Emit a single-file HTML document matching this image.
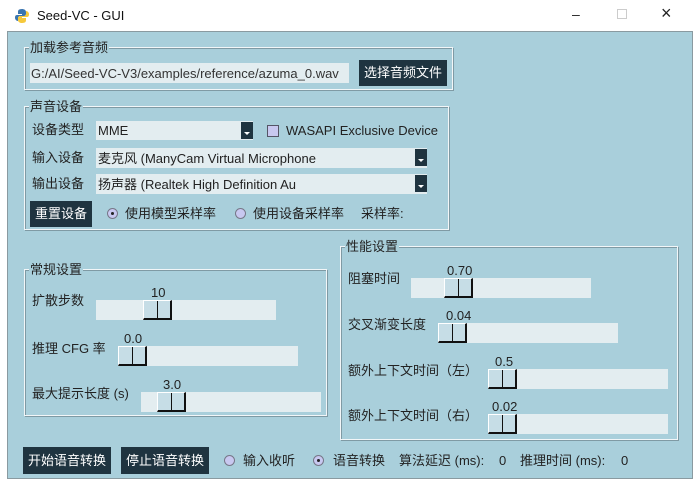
<!DOCTYPE html>
<html><head><meta charset="utf-8"><style>
*{margin:0;padding:0;box-sizing:border-box}
body{width:699px;height:489px;background:#fff;position:relative;overflow:hidden;font-family:"Liberation Sans","Noto Sans CJK SC",sans-serif;font-size:13px;color:#222}
.a{position:absolute;white-space:nowrap;line-height:15px}
#win{position:absolute;left:7px;top:31px;width:686px;height:448px;background:#a9cfdb;border:1px solid #8a9aa0}
.fr{position:absolute;border:1px solid #f2f6f8;box-shadow:inset 1px 1px 0 #7f9aa4, 1px 1px 0 #7f9aa4}
.lg{position:absolute;top:-8px;left:4px;background:#a9cfdb;padding:0 1px;line-height:15px}
.btn{position:absolute;background:#1f3440;color:#fff;text-align:center;line-height:25px;font-size:13px}
.ent{position:absolute;background:#e3edf0}
.dd{position:absolute;right:0;top:1px;width:12px;height:17px;background:#1f3440}
.dd:after{content:"";position:absolute;left:3px;top:10px;border:3px solid transparent;border-top:3px solid #fff}
.tr{position:absolute;background:#e3edf0;height:20px;width:180px}
.th{position:absolute;top:0;width:29px;height:20px;background:#c6dde6;border-left:1px solid #fff;border-top:1px solid #fff;border-right:2px solid #111;border-bottom:2px solid #111}
.th:after{content:"";position:absolute;left:13px;top:0;width:1px;height:18px;background:#111}
.rb{position:absolute;width:11px;height:11px;border-radius:50%;background:#c8c8f0;border:1px solid #778}
.rb.on:after{content:"";position:absolute;left:3px;top:3px;width:3px;height:3px;border-radius:50%;background:#222}
</style></head><body>
<svg class="a" style="left:14px;top:8px" width="16" height="16" viewBox="0 0 16 16"><path d="M8 1C4 1 4 3 4 4v2h4v1H3C1 7 1 9 1 10s1 3 3 3V10c0-1 1-2 2-2h4c1 0 2-1 2-2V4c0-2-2-3-4-3z" fill="#3a75b0"/><path d="M8 15c4 0 4-2 4-3v-2H8V9h5c2 0 2-2 2-3s-1-3-3-3v3c0 1-1 2-2 2H6c-1 0-2 1-2 2v2c0 2 2 3 4 3z" fill="#f6c93c"/></svg>
<div class="a" style="left:37px;top:8px;font-size:13px;color:#111">Seed-VC - GUI</div>
<div class="a" style="left:572px;top:7px;font-size:14px">–</div>
<div class="a" style="left:617px;top:9px;width:10px;height:10px;border:1px solid #ccc"></div>
<div class="a" style="left:661px;top:6px;font-size:18px;color:#222">×</div>
<div id="win"></div>

<div class="fr" style="left:24px;top:47px;width:429px;height:43px"><span class="lg">加载参考音频</span></div>
<div class="ent" style="left:30px;top:63px;width:319px;height:20px"></div>
<div class="a" style="left:31px;top:66px;font-size:13px;color:#333">G:/AI/Seed-VC-V3/examples/reference/azuma_0.wav</div>
<div class="btn" style="left:359px;top:60px;width:88px;height:26px">选择音频文件</div>

<div class="fr" style="left:24px;top:106px;width:425px;height:124px"><span class="lg">声音设备</span></div>
<div class="a" style="left:32px;top:122px">设备类型</div>
<div class="ent" style="left:96px;top:121px;width:157px;height:19px"><div class="dd"></div></div>
<div class="a" style="left:98px;top:123px">MME</div>
<div class="a" style="left:267px;top:125px;width:12px;height:12px;background:#c8c8f0;border:1px solid #556"></div>
<div class="a" style="left:286px;top:123px">WASAPI Exclusive Device</div>
<div class="a" style="left:32px;top:150px">输入设备</div>
<div class="ent" style="left:96px;top:148px;width:331px;height:20px"><div class="dd"></div></div>
<div class="a" style="left:98px;top:151px">麦克风 (ManyCam Virtual Microphone</div>
<div class="a" style="left:32px;top:176px">输出设备</div>
<div class="ent" style="left:96px;top:174px;width:331px;height:20px"><div class="dd"></div></div>
<div class="a" style="left:98px;top:177px">扬声器 (Realtek High Definition Au</div>
<div class="btn" style="left:30px;top:201px;width:62px;height:26px">重置设备</div>
<div class="rb on" style="left:107px;top:208px"></div>
<div class="a" style="left:125px;top:206px">使用模型采样率</div>
<div class="rb" style="left:235px;top:208px"></div>
<div class="a" style="left:253px;top:206px">使用设备采样率</div>
<div class="a" style="left:361px;top:206px">采样率:</div>

<div class="fr" style="left:24px;top:269px;width:303px;height:147px"><span class="lg">常规设置</span></div>
<div class="a" style="left:32px;top:293px">扩散步数</div>
<div class="a" style="left:151px;top:285px">10</div>
<div class="tr" style="left:96px;top:300px"><div class="th" style="left:47px"></div></div>
<div class="a" style="left:32px;top:341px">推理 CFG 率</div>
<div class="a" style="left:124px;top:331px">0.0</div>
<div class="tr" style="left:118px;top:346px"><div class="th" style="left:0"></div></div>
<div class="a" style="left:32px;top:386px">最大提示长度 (s)</div>
<div class="a" style="left:163px;top:377px">3.0</div>
<div class="tr" style="left:141px;top:392px"><div class="th" style="left:16px"></div></div>

<div class="fr" style="left:340px;top:246px;width:338px;height:194px"><span class="lg">性能设置</span></div>
<div class="a" style="left:348px;top:271px">阻塞时间</div>
<div class="a" style="left:447px;top:263px">0.70</div>
<div class="tr" style="left:411px;top:278px"><div class="th" style="left:33px"></div></div>
<div class="a" style="left:348px;top:317px">交叉渐变长度</div>
<div class="a" style="left:446px;top:308px">0.04</div>
<div class="tr" style="left:438px;top:323px"><div class="th" style="left:0"></div></div>
<div class="a" style="left:348px;top:363px">额外上下文时间（左）</div>
<div class="a" style="left:495px;top:354px">0.5</div>
<div class="tr" style="left:488px;top:369px"><div class="th" style="left:0"></div></div>
<div class="a" style="left:348px;top:408px">额外上下文时间（右）</div>
<div class="a" style="left:492px;top:399px">0.02</div>
<div class="tr" style="left:488px;top:414px"><div class="th" style="left:0"></div></div>

<div class="btn" style="left:23px;top:447px;width:88px;height:27px;line-height:27px">开始语音转换</div>
<div class="btn" style="left:121px;top:447px;width:88px;height:27px;line-height:27px">停止语音转换</div>
<div class="rb" style="left:224px;top:455px"></div>
<div class="a" style="left:243px;top:453px">输入收听</div>
<div class="rb on" style="left:313px;top:455px"></div>
<div class="a" style="left:333px;top:453px">语音转换</div>
<div class="a" style="left:399px;top:453px">算法延迟 (ms):</div>
<div class="a" style="left:499px;top:453px">0</div>
<div class="a" style="left:520px;top:453px">推理时间 (ms):</div>
<div class="a" style="left:621px;top:453px">0</div>
</body></html>
